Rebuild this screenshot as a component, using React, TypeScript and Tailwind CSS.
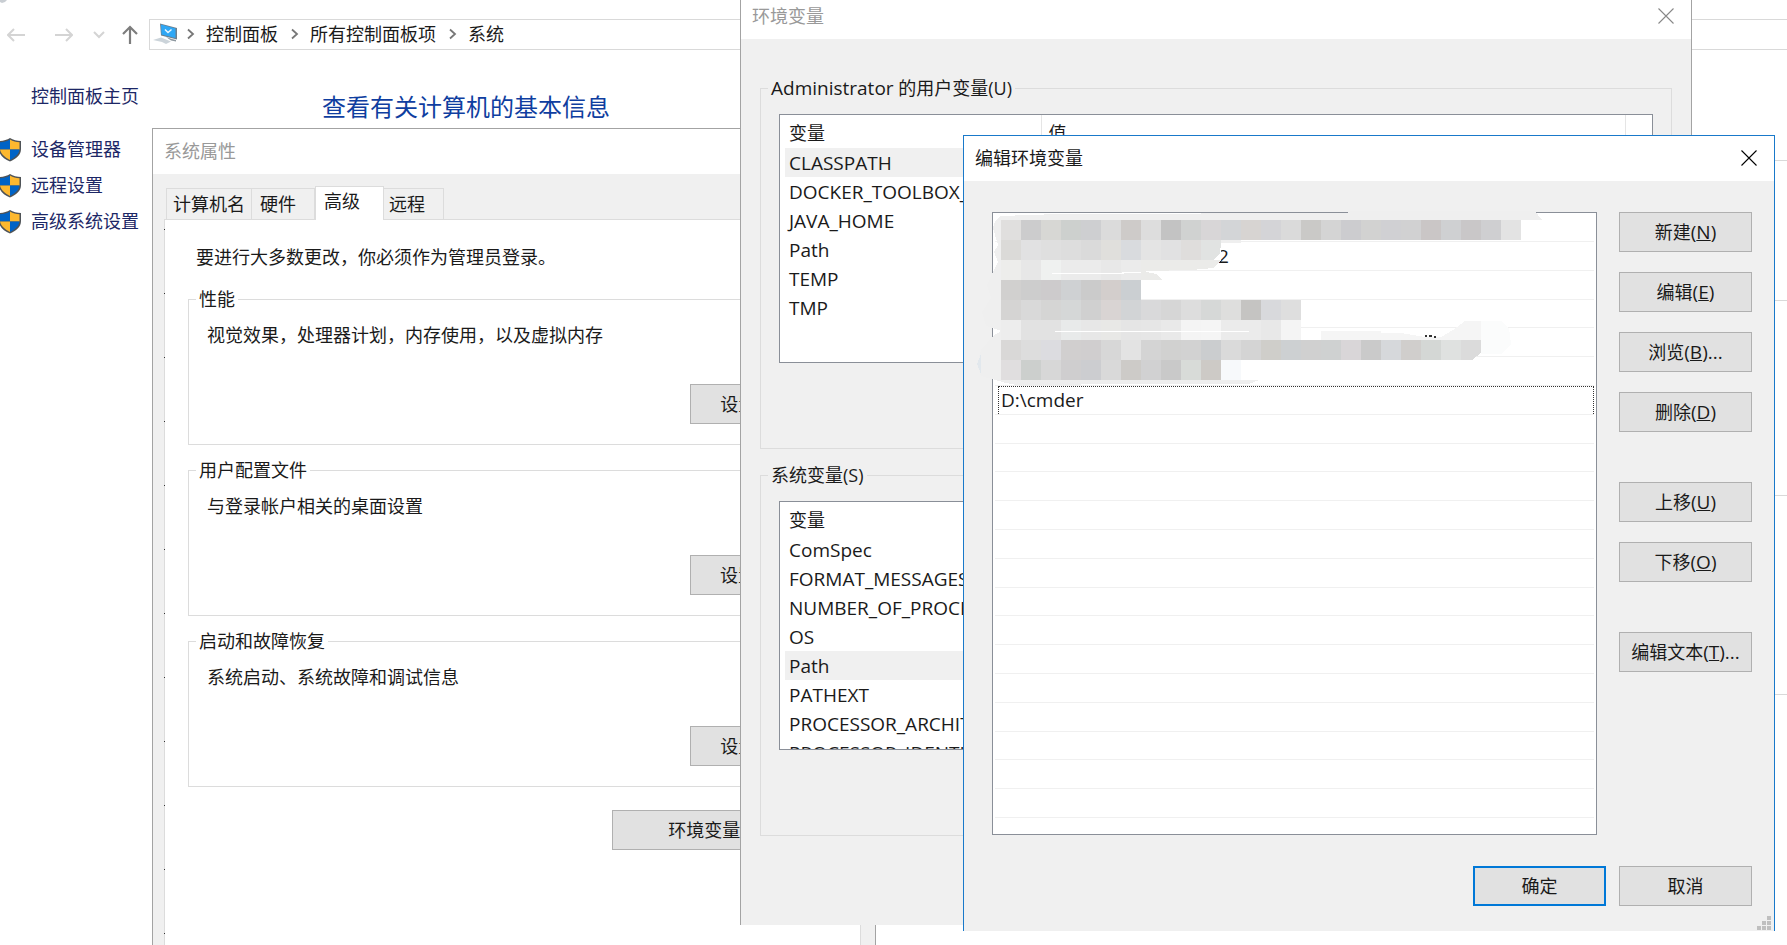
import React, { useState } from 'react';

const TABS = ['计算机名', '硬件', '高级', '远程'];

const SETTING_GROUPS = [
  { title: '性能', text: '视觉效果，处理器计划，内存使用，以及虚拟内存', key: 'S' },
  { title: '用户配置文件', text: '与登录帐户相关的桌面设置', key: 'E' },
  { title: '启动和故障恢复', text: '系统启动、系统故障和调试信息', key: 'T' },
];

const USER_VARS = ['CLASSPATH', 'DOCKER_TOOLBOX_INSTALL_PATH', 'JAVA_HOME', 'Path', 'TEMP', 'TMP'];

const SYSTEM_VARS = [
  'ComSpec',
  'FORMAT_MESSAGES',
  'NUMBER_OF_PROCESSORS',
  'OS',
  'Path',
  'PATHEXT',
  'PROCESSOR_ARCHITECTURE',
  'PROCESSOR_IDENTIFIER',
];

const PATH_ROWS = ['', '2', '', '', '', '', 'D:\\cmder', ...Array(14).fill('')];

// One entry per 20px line of blocks that hides the private paths
const MOSAIC = [
  'e0dfde cccccd d7d7d4 cdd0ce cecfd1 dbdbdb cecbc9 dddddd c3c3c3 d0d2d1 d8d6d7 d3d5d7 d7d4d2 d4d4d7 dadada cac9c7 d4d4d4 cccccf d2d2d1 d0d0d3 d1d1d2 cac6c6 cfd0d2 c9c7c8 cfcfd1 e3e3e3',
  'dbdad8 e1e1e2 dfdfdf dddddd dadada e0dfdc d9dbde e4e4e4 e1e1e2 dfdddc e1e3e2',
  'ededeb e7e7e7 eff1f0 ebebeb ebebeb e8e8e8 ebebeb',
  'd1d0cf cdcdcd cdcbcc cfd1d3 cbcbcb d3cecc cbcfd2',
  'd5d4d3 d9d9d9 d5d5d4 d5d7d7 d0d0d0 d9d4d3 d2d4d6 d9d9da d6d6d6 dddddd d6d8d7 dededd c5c4c2 d8d9dc dedede',
  'ededed e2e2e2 e2e2e2 e8eaea e7e7e7 e8e8e6 e5e5e5 e6e6e6 e9e9e9 f4f4f4 f5f5f5 ebebeb ebebeb e8e8e8 f4f4f4',
  'd9d8d7 dddddd dcdce0 d1cfcf d0cecf d7d7d7 e3e3e3 d4d4d4 d1d1d0 d2d2d2 cbcdcf dadada d4d4d4 cfceca cdd0d2 d0d0d0 cfd1d1 d9d6d8 cacaca d6d8db d0cecc d4d7d5 dfe1e0',
  'e0dedf cccfcd d7d7d7 cfcecf cccdd0 d9d9d9 cdcbc8 d1d1d2 c9c9c9 d8dbd8 cdcac6 f7f9fb',
].map((row) => row.split(' '));

const Mosaic: React.FC = () => (
  <svg className="absolute -left-5 -top-0.5 pointer-events-none" width="600" height="180" viewBox="972 211 600 180" shapeRendering="crispEdges" aria-hidden="true">
    <path d="M1347 211 H1534 L1541 220 H1000 V216 L1058 214 L1347 213 Z" fill="#efefef" />
    <path d="M1000 216 L994 221 L992 228 L997 245 L993 252 L997 262 L992 272 L986 285 L990 298 L981 312 L985 326 L1000 331 L992 336 L980 350 L976 364 L980 376 L998 381 H1000 Z" fill="#efefef" />
    <path d="M1000 380 H1258 L1248 384 H1080 V386 H1020 L1000 382 Z" fill="#eeeeee" />
    <path d="M976 364 L980 354 V374 Z" fill="#e2e8ed" />
    <path d="M1140 260 H1220 L1212 268 L1190 270 L1145 271 V272 L1156 274 L1161 280 H1140 Z" fill="#ebebe9" />
    <path d="M1220 240 H1240 V243 H1220 Z" fill="#efefef" />
    <path d="M1320 331 H1380 L1380 333 H1400 L1424 337 H1440 L1452 330 L1464 321 H1480 V340 H1320 Z" fill="#f5f5f5" />
    <path d="M1480 321 H1500 L1508 328 L1510 344 L1500 354 H1480 Z" fill="#fbfcfc" />
    <path d="M1460 340 H1480 V353 L1471 360 H1460 Z" fill="#dbdbdb" />
    {MOSAIC.map((row, y) =>
      row.map((color, x) => (
        <rect key={`${x}-${y}`} x={1000 + x * 20} y={220 + y * 20} width="20" height="20" fill={`#${color}`} />
      ))
    )}
    <path d="M1220 243 V260 H1212 L1219 253 Z" fill="#fff" />
    <path d="M1051 273 H1123 M1121 272 H1140 M1054 331 H1248" stroke="#fff" />
    <path d="M1424 336 H1426 M1428 336 H1431 M1433 337 H1435" stroke="#333" strokeWidth="2" />
  </svg>
);

const Shield: React.FC = () => (
  <svg width="22" height="25" viewBox="0 0 22 25" className="shrink-0" aria-hidden="true">
    <path d="M10 1 C7 3 3 4 -1 4 V12 C-1 18 4 22 10 24.500 C16 22 21 18 21 12 V4 C17 4 13 3 10 1 Z" fill="#4f5357" />
    <path d="M10 2.500 C7 4.500 4 5 0 5.300 V12.500 H10 Z" fill="#0063c6" />
    <path d="M10 2.500 C13 4.500 16 5 19.500 5.300 V12.500 H10 Z" fill="#fdb82f" />
    <path d="M0 12.500 C1 17 5 20.500 10 23 V12.500 Z" fill="#fdb82f" />
    <path d="M19.500 12.500 C19 17 15 20.500 10 23 V12.500 Z" fill="#0063c6" />
  </svg>
);

const ComputerIcon: React.FC = () => (
  <svg width="25" height="22" viewBox="0 0 25 22" className="shrink-0" aria-hidden="true">
    <path d="M13 14 L19 16 L23 17 V18.500 L18 17.500 Z" fill="#8d979f" />
    <path d="M7 0.500 L24 5 V16.500 L8 12.500 Z" fill="#6d7f8c" />
    <path d="M8 1.500 L22.500 5.500 V15 L8.500 11.500 Z" fill="#2ea7f5" />
    <path d="M12 6.500 L15 9.500 L18.500 6.500" stroke="#e9f7ff" strokeWidth="1.500" fill="none" />
    <path d="M0 17 L8 14.500 L18 18.500 L13 21 L9 19 Z" fill="#ccd4da" />
  </svg>
);

const Chevron: React.FC = () => (
  <svg width="8" height="12" viewBox="0 0 8 12" className="shrink-0" aria-hidden="true">
    <path d="M1 1.500 L6 6 L1 10.500" stroke="#777" strokeWidth="1.800" fill="none" />
  </svg>
);

const CloseButton: React.FC<{ muted?: boolean }> = ({ muted }) => (
  <button aria-label="关闭" className="px-[17px]">
    <svg width="16" height="16" viewBox="0 0 16 16" fill="none" stroke={muted ? '#888' : '#000'} strokeWidth="1.100">
      <path d="M0.500 0.500 L15.500 15.500 M15.500 0.500 L0.500 15.500" />
    </svg>
  </button>
);

const PushButton: React.FC<{ label: string; hotkey?: string; more?: boolean; primary?: boolean; wide?: boolean }> = ({
  label,
  hotkey,
  more,
  primary,
  wide,
}) => (
  <button
    className={`h-10 shrink-0 whitespace-nowrap bg-[#e1e1e1] ${wide ? 'w-[225px]' : 'w-[133px]'} ${
      primary ? 'border-2 border-[#0078d7]' : 'border border-[#b0b0b0]'
    }`}
  >
    {label}
    <span className="text-[19px]">
      {hotkey && <>(<u>{hotkey}</u>)</>}
      {more && '...'}
    </span>
  </button>
);

const VariableTable: React.FC<{ names: string[]; selected: string }> = ({ names, selected }) => (
  <div className="h-[249px] overflow-hidden border border-[#8a8f98] bg-white">
    <table className="ml-[5px] w-[calc(100%-5px)] table-fixed border-collapse text-left">
      <thead>
        <tr className="h-[33px]">
          <th className="w-[256px] border-r border-[#e5e5e5] pl-1 pt-[3px] font-normal">变量</th>
          <th className="border-r border-[#e5e5e5] pl-[7px] pt-[3px] font-normal">值</th>
          <td className="w-[27px]" />
        </tr>
      </thead>
      <tbody className="text-[19px]">
        {names.map((name) => (
          <tr key={name} className={`h-[29px] ${name === selected ? 'bg-[#f0f0f0]' : ''}`}>
            <td colSpan={3} className="pl-1">{name}</td>
          </tr>
        ))}
      </tbody>
    </table>
  </div>
);

const ControlPanel: React.FC = () => (
  <>
    <svg className="absolute left-0 top-0" width="8" height="3" viewBox="0 0 8 3" aria-hidden="true">
      <path d="M0 0 H7 L5 2 L2 3 L0 2 Z" fill="#c9ced3" />
    </svg>
    <header className="flex items-center pt-[19px]">
      <div className="flex w-[149px] shrink-0 items-center pl-[7px]">
        <button aria-label="后退">
          <svg width="19" height="14" viewBox="0 0 19 14" fill="none" stroke="#d4d4d4" strokeWidth="2">
            <path d="M18 7 H1 M7 1 L1 7 L7 13" />
          </svg>
        </button>
        <button aria-label="前进" className="ml-7">
          <svg width="19" height="14" viewBox="0 0 19 14" fill="none" stroke="#d4d4d4" strokeWidth="2">
            <path d="M1 7 H18 M12 1 L18 7 L12 13" />
          </svg>
        </button>
        <button aria-label="最近浏览的位置" className="ml-5">
          <svg width="12" height="8" viewBox="0 0 12 8" fill="none" stroke="#d4d4d4" strokeWidth="2">
            <path d="M1 1 L6 6 L11 1" />
          </svg>
        </button>
        <button aria-label="上移一级" className="ml-4">
          <svg width="18" height="20" viewBox="0 0 18 20" fill="none" stroke="#7d7d7d" strokeWidth="2.200">
            <path d="M9 19 V2 M2 9 L9 2 L16 9" />
          </svg>
        </button>
      </div>
      <nav className="flex h-[31px] flex-1 items-center border border-r-0 border-[#d9d9d9] pb-[2px] pl-[3px]">
        <ComputerIcon />
        <ol className="flex items-center">
          {['控制面板', '所有控制面板项', '系统'].map((crumb, i) => (
            <li key={crumb} className={`flex items-center ${i === 0 ? 'gap-[11px] pl-[9px]' : 'gap-[11px] pl-[13px]'}`}>
              <Chevron />
              <a href="#">{crumb}</a>
            </li>
          ))}
        </ol>
      </nav>
    </header>
    <div className="flex">
      <aside className="w-[152px] shrink-0 pt-8 text-[#1c2766]">
        <a href="#" className="block pl-[31px] leading-7">控制面板主页</a>
        <ul className="mt-[21px]">
          {['设备管理器', '远程设置', '高级系统设置'].map((item) => (
            <li key={item}>
              <a href="#" className="flex h-9 items-center gap-[9px] whitespace-nowrap">
                <Shield />
                {item}
              </a>
            </li>
          ))}
        </ul>
      </aside>
      <main className="flex-1">
        <h1 className="mt-[39px] pl-[170px] text-[24px] leading-9 text-[#0f3ea0]">查看有关计算机的基本信息</h1>
        <hr className="mt-[35px] border-[#d9d9d9]" />
        <hr className="mt-[139px] border-[#d9d9d9]" />
        <hr className="mt-[194px] border-[#d9d9d9]" />
        <hr className="mt-[198px] border-[#d9d9d9]" />
      </main>
    </div>
  </>
);

const SystemProperties: React.FC = () => {
  const [tab, setTab] = useState('高级');

  return (
    <section className="absolute bottom-0 left-[152px] top-[128px] flex w-[724px] flex-col border border-b-0 border-[#a3a3a3] bg-[#f0f0f0]">
      <h2 className="flex h-[45px] shrink-0 items-center bg-white pb-[2px] pl-[11px] text-[#999]">系统属性</h2>
      <div className="flex h-[45px] shrink-0 items-end pl-[13px]" role="tablist">
        {TABS.map((name) => (
          <button
            key={name}
            role="tab"
            aria-selected={tab === name}
            onClick={() => setTab(name)}
            className={
              tab === name
                ? 'z-10 -mb-px h-[34px] border border-b-0 border-[#dcdcdc] bg-white pb-[5px] pl-[8px] pr-[23px]'
                : 'h-[31px] border border-b-0 border-l-0 border-[#dcdcdc] pl-[6px] pr-[6px] first:border-l nth-[2]:pl-[8px] nth-[2]:pr-[18px] last:pl-[5px] last:pr-[18px]'
            }
          >
            {name}
          </button>
        ))}
      </div>
      <div className="ml-[11px] mr-[14px] flex flex-1 border-r border-t border-[#dcdcdc] bg-white">
        <div className="w-px shrink-0 bg-[repeating-linear-gradient(#dcdcdc_10px,#dcdcdc_73px,#333_73px,#333_74px)]" />
        <div className="flex flex-1 flex-col px-[23px] pt-[25px]">
          <p className="pl-2 leading-6">要进行大多数更改，你必须作为管理员登录。</p>
          <div className="mt-[17px] flex flex-col gap-3">
            {SETTING_GROUPS.map((group) => (
              <fieldset key={group.title} className="border border-[#dcdcdc] pb-5 pr-[13px]">
                <legend className="ml-[7px] px-[3px] leading-[26px]">{group.title}</legend>
                <p className="pl-[18px] pt-[11px] leading-6">{group.text}</p>
                <div className="mt-[37px] flex justify-end">
                  <PushButton label="设置" hotkey={group.key} more />
                </div>
              </fieldset>
            ))}
          </div>
          <div className="mt-[23px] flex justify-end">
            <PushButton label="环境变量" hotkey="N" more wide />
          </div>
        </div>
      </div>
    </section>
  );
};

const EnvironmentVariables: React.FC = () => (
  <section className="absolute left-[740px] right-[95px] top-0 border-x border-[#a3a3a3] bg-[#f0f0f0] pb-[89px]">
    <div className="flex h-[39px] items-center justify-between bg-white pb-2 pl-[11px] text-[#999]">
      <h2>环境变量</h2>
      <CloseButton muted />
    </div>
    <div className="flex flex-col gap-[13px] px-[19px] pt-9">
      <fieldset className="border border-[#dcdcdc] px-[18px] pb-[85px]">
        <legend className="-ml-[11px] mb-[13px] px-[3px] leading-[26px]">
          <span className="text-[19px]">Administrator</span> 的用户变量(U)
        </legend>
        <VariableTable names={USER_VARS} selected="CLASSPATH" />
      </fieldset>
      <fieldset className="border border-[#dcdcdc] px-[18px] pb-[85px]">
        <legend className="-ml-[11px] mb-[13px] px-[3px] leading-[26px]">系统变量(S)</legend>
        <VariableTable names={SYSTEM_VARS} selected="Path" />
      </fieldset>
    </div>
  </section>
);

const EditVariable: React.FC = () => (
  <section className="absolute left-[963px] right-[12px] top-[135px] border border-b-0 border-[#1979ca] bg-[#f0f0f0]">
    <div className="flex h-[45px] items-center justify-between bg-white pb-[2px] pl-[11px]">
      <h2>编辑环境变量</h2>
      <CloseButton />
    </div>
    <div className="flex gap-[22px] pl-7 pr-[22px] pt-[31px]">
      <div className="relative h-[623px] flex-1 border border-[#8a8f98] bg-white px-[2px]">
        <ul className="flex h-[605px] flex-col">
          {PATH_ROWS.map((path, i) => (
            <li key={i} className="flex flex-1 border-b border-[#f0f0f0] pl-[3px]">
              <span
                className={`flex-1 border text-[19px] leading-[26px] ${
                  i === 6 ? 'border-b-0 border-dotted border-[#333] pl-[2px]' : 'border-transparent pl-[219px]'
                }`}
              >
                {path}
              </span>
            </li>
          ))}
        </ul>
        <Mosaic />
      </div>
      <div className="flex flex-col gap-5">
        <PushButton label="新建" hotkey="N" />
        <PushButton label="编辑" hotkey="E" />
        <PushButton label="浏览" hotkey="B" more />
        <PushButton label="删除" hotkey="D" />
        <div className="mt-[30px] flex flex-col gap-5">
          <PushButton label="上移" hotkey="U" />
          <PushButton label="下移" hotkey="O" />
        </div>
        <div className="mt-[30px]">
          <PushButton label="编辑文本" hotkey="T" more />
        </div>
      </div>
    </div>
    <div className="flex justify-end gap-[13px] pb-[25px] pr-[22px] pt-[31px]">
      <PushButton label="确定" primary />
      <PushButton label="取消" />
    </div>
    <svg className="absolute bottom-px right-[3px]" width="14" height="14" viewBox="0 0 14 14" fill="#bfbfbf" aria-hidden="true">
      <path d="M10 0h4v4h-4z M5 5h4v4h-4z M10 5h4v4h-4z M0 10h4v4h-4z M5 10h4v4h-4z M10 10h4v4h-4z" />
    </svg>
  </section>
);

const App: React.FC = () => {
  return (
    <div className="relative min-h-screen overflow-hidden bg-white font-['Open_Sans','Noto_Sans_CJK_SC',sans-serif] text-[18px] leading-6 text-[#1a1a1a]">
      <ControlPanel />
      <SystemProperties />
      <EnvironmentVariables />
      <EditVariable />
    </div>
  );
};

export default App;
